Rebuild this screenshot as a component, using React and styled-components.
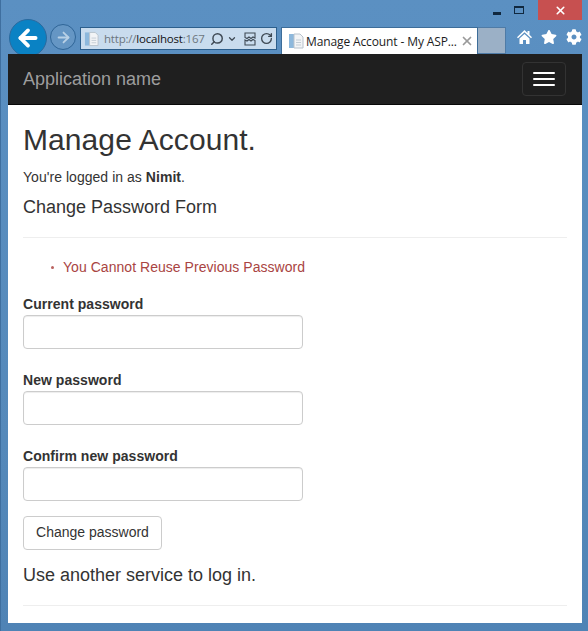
import React from "react";
import styled, { createGlobalStyle } from "styled-components";
import { FaStar, FaCog } from "react-icons/fa";
import { Search, RotateCw, ChevronDown, X, ArrowLeft, ArrowRight } from "lucide-react";

const Global = createGlobalStyle`
	html, body { margin: 0; padding: 0; background: #5a8dbd; }
	* { box-sizing: border-box; }
`;

const PageIcon = ({ size = 16 }) => (
	<svg width={size} height={size} viewBox="0 0 16 16">
		<rect x="1" y="1" width="5" height="14" fill="#8db8dc" />
		<path d="M6 1h6l3 3v11H6z" fill="#f2f4f6" stroke="#b8c2cc" strokeWidth="1" />
		<path d="M8 7h5M8 9.500h5M8 12h5" stroke="#c3ccd4" strokeWidth="1" />
	</svg>
);

const CompatIcon = () => (
	<svg width="12" height="14" viewBox="0 0 12 14" fill="none" stroke="#3f4a55" strokeWidth="1.100">
		<path d="M1 1h10v5L9 5 7 6.500 5 5 3 6.500 1 5.500z" />
		<path d="M1 8l2 1 2-1.500L7 9l2-1.500L11 8.500V13H1z" />
	</svg>
);

const HomeIcon = () => (
	<svg width="15" height="16" viewBox="0 0 15 16" fill="#fff">
		<path d="M7.500 1L0 8.200l1 1.100L7.500 3.200 14 9.300l1-1.100-2.500-2.400V2h-2v1.900z" />
		<path d="M2.500 9.500L7.500 5l5 4.500V15H9v-4H6v4H2.500z" />
	</svg>
);

const Window = styled.div`
	width: 588px;
	height: 631px;
	overflow: hidden;
	display: flex;
	flex-direction: column;
	background: linear-gradient(#5b90c2, #5589ba 70%, #4f83b5);
	border-left: 1px solid #3f6f9f;
	font-family: "Liberation Sans", Arial, sans-serif;
`;

const TitleBar = styled.div`
	height: 26px;
	flex: none;
	display: flex;
	justify-content: flex-end;
	padding-right: 6px;
`;

const WinButton = styled.div`
	width: ${(props) => props.$w}px;
	height: 20px;
	display: flex;
	align-items: center;
	justify-content: center;
	background: ${(props) => props.$bg || "transparent"};
`;

const Minimize = styled.div`
	width: 8px;
	height: 3px;
	margin-top: 6px;
	background: #10283f;
`;

const Maximize = styled.div`
	width: 10px;
	height: 8px;
	border: 1px solid #10283f;
	border-top-width: 2px;
`;

const Toolbar = styled.div`
	height: 28px;
	flex: none;
	display: flex;
	align-items: flex-start;
	padding-left: 8px;
`;

const BackButton = styled.div`
	width: 38px;
	height: 38px;
	flex: none;
	margin-top: -7px;
	border-radius: 50%;
	background: #0a82c4;
	border: 1px solid #2a6a9f;
	display: flex;
	align-items: center;
	justify-content: center;
	color: #fff;
`;

const ForwardButton = styled.div`
	width: 26px;
	height: 26px;
	flex: none;
	margin: -2px 0 0 3px;
	border-radius: 50%;
	background: #6596c4;
	border: 1px solid #2f6597;
	display: flex;
	align-items: center;
	justify-content: center;
	color: #b9d1e6;
`;

const AddressBar = styled.div`
	width: 197px;
	height: 23px;
	flex: none;
	margin: 1px 0 0 4px;
	padding: 0 3px;
	display: flex;
	align-items: center;
	background: #c9dcee;
	border: 1px solid #2d5f8c;
	color: #3f4a55;
`;

const Url = styled.div`
	width: 103px;
	flex: none;
	margin-left: 5px;
	white-space: nowrap;
	font: 11.500px "Open Sans", sans-serif;
	letter-spacing: -0.2px;
	color: #6d7780;

	b {
		font-weight: 400;
		color: #111;
	}
`;

const AddressTools = styled.div`
	display: flex;
	align-items: center;
	margin-left: 3px;
`;

const SearchIcon = styled(Search)`
	transform: scaleX(-1);
`;

const CaretIcon = styled(ChevronDown)`
	margin: 0 7px 0 3px;
`;

const RefreshIcon = styled(RotateCw)`
	margin-left: 4px;
`;

const Tab = styled.div`
	width: 197px;
	height: 27px;
	flex: none;
	margin: 1px 0 0 4px;
	padding: 0 3px 0 6px;
	display: flex;
	align-items: center;
	gap: 2px;
	background: #fff;
	border: 1px solid #3d6d99;
	border-bottom: none;
	color: #1c1c1c;
	white-space: nowrap;
`;

const TabTitle = styled.span`
	flex: 1;
	font: 12px "Open Sans", sans-serif;
	letter-spacing: -0.12px;
`;

const NewTab = styled.div`
	width: 28px;
	height: 27px;
	flex: none;
	margin-top: 1px;
	background: #9bb0c6;
	border: 1px solid #4f7ba6;
	border-left: none;
`;

const BrowserTools = styled.div`
	display: flex;
	align-items: center;
	gap: 9px;
	margin: 3px 0 0 11px;
	color: #fff;
`;

const Frame = styled.div`
	flex: 1;
	margin: 0 6px 8px 7px;
	display: flex;
	flex-direction: column;
	background: #fff;
	position: relative;
	min-height: 0;
`;

const Navbar = styled.div`
	height: 51px;
	flex: none;
	padding: 0 16px 0 15px;
	display: flex;
	align-items: center;
	justify-content: space-between;
	background: #1f1f1f;
	border-bottom: 1px solid #080808;
`;

const Brand = styled.div`
	font-size: 18px;
	color: #9d9d9d;
`;

const Toggle = styled.div`
	width: 44px;
	height: 34px;
	display: flex;
	flex-direction: column;
	align-items: center;
	justify-content: center;
	gap: 4px;
	border: 1px solid #333;
	border-radius: 4px;
`;

const ToggleBar = styled.div`
	width: 22px;
	height: 2px;
	border-radius: 1px;
	background: #fff;
`;

const Content = styled.div`
	padding: 18px 15px 0;
	font-size: 14px;
	line-height: 20px;
	letter-spacing: 0.04px;
	color: #333;
`;

const Heading = styled.h1`
	margin: 0 0 11px;
	font-size: 30px;
	font-weight: 500;
	line-height: 33px;
	letter-spacing: 0.08px;
`;

const Text = styled.p`
	margin: 0 0 10px;
`;

const SubHeading = styled.h4`
	margin: 0;
	font-size: 18px;
	font-weight: 500;
	line-height: 20px;
	letter-spacing: 0;
`;

const Rule = styled.hr`
	margin: 20px 0 19px;
	border: 0;
	border-top: 1px solid #eee;
`;

const Errors = styled.ul`
	margin: 0 0 17px;
	padding-left: 28px;
	list-style: none;
	color: #a94442;
`;

const ErrorItem = styled.li`
	display: flex;
	align-items: center;
	gap: 9px;
`;

const Dot = styled.span`
	width: 3px;
	height: 3px;
	border-radius: 50%;
	background: #b9625f;
`;

const Group = styled.div`
	margin-bottom: 21px;
`;

const Label = styled.label`
	display: block;
	margin-bottom: 1px;
	font-weight: 700;
`;

const Input = styled.input`
	display: block;
	width: 280px;
	height: 34px;
	padding: 6px 12px;
	background: #fff;
	border: 1px solid #ccc;
	border-radius: 4px;
	box-shadow: inset 0 1px 1px rgba(0, 0, 0, 0.075);
`;

const Button = styled.button`
	display: block;
	width: 139px;
	height: 34px;
	margin: -6px 0 15px;
	padding: 0 0 2px;
	background: #fff;
	border: 1px solid #ccc;
	border-radius: 4px;
	font: 14px "Liberation Sans", Arial, sans-serif;
	color: #333;
`;

const FIELDS = ["Current password", "New password", "Confirm new password"];

export default function App() {
	return (
		<Window>
			<Global />
			<TitleBar>
				<WinButton $w={22}><Minimize /></WinButton>
				<WinButton $w={22}><Maximize /></WinButton>
				<WinButton $w={8} />
				<WinButton $w={44} $bg="#c75050"><X size={13} color="#fff" strokeWidth={3} /></WinButton>
			</TitleBar>
			<Toolbar>
				<BackButton><ArrowLeft size={26} strokeWidth={3.500} /></BackButton>
				<ForwardButton><ArrowRight size={17} strokeWidth={2.500} /></ForwardButton>
				<AddressBar>
					<PageIcon />
					<Url>http://<b>localhost</b>:167</Url>
					<AddressTools>
						<SearchIcon size={14} strokeWidth={2.500} />
						<CaretIcon size={10} strokeWidth={3} />
						<CompatIcon />
						<RefreshIcon size={13} strokeWidth={2.500} />
					</AddressTools>
				</AddressBar>
				<Tab>
					<PageIcon />
					<TabTitle>Manage Account - My ASP...</TabTitle>
					<X size={14} color="#9a9a9a" strokeWidth={3} />
				</Tab>
				<NewTab />
				<BrowserTools>
					<HomeIcon />
					<FaStar size={16} />
					<FaCog size={16} />
				</BrowserTools>
			</Toolbar>
			<Frame>
				<Navbar>
					<Brand>Application name</Brand>
					<Toggle>
						<ToggleBar />
						<ToggleBar />
						<ToggleBar />
					</Toggle>
				</Navbar>
				<Content>
					<Heading>Manage Account.</Heading>
					<Text>You're logged in as <strong>Nimit</strong>.</Text>
					<SubHeading>Change Password Form</SubHeading>
					<Rule />
					<Errors>
						<ErrorItem><Dot />You Cannot Reuse Previous Password</ErrorItem>
					</Errors>
					{FIELDS.map((field) => (
						<Group key={field}>
							<Label>{field}</Label>
							<Input type="password" />
						</Group>
					))}
					<Button>Change password</Button>
					<SubHeading>Use another service to log in.</SubHeading>
					<Rule />
				</Content>
			</Frame>
		</Window>
	);
}
